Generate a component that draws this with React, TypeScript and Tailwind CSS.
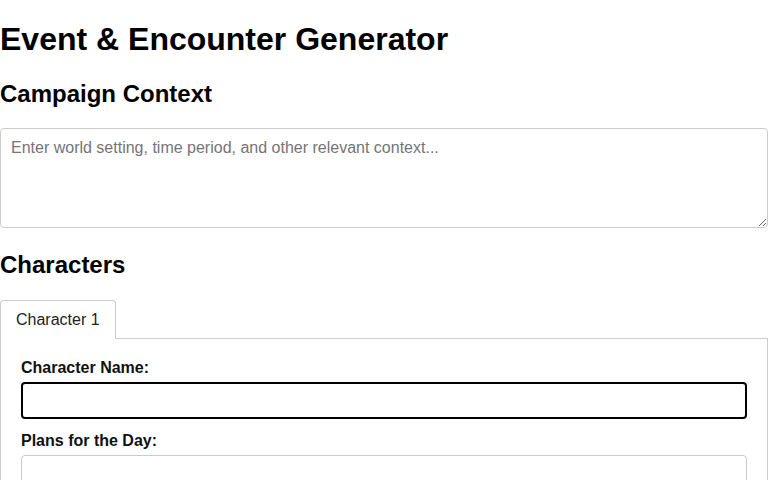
import React from 'react';

export default function App() {
  return (
    <div className="bg-white text-black font-['Liberation_Sans',Arial,sans-serif]">
      <h1 className="text-[32px] font-bold leading-[normal] my-[21.44px]">
        Event &amp; Encounter Generator
      </h1>

      <h2 className="text-[24px] font-bold leading-[normal] mb-[20px]">Campaign Context</h2>
      <textarea
        className="block w-full h-[100px] p-[10px] border border-[#ccc] rounded-[4px] text-[16px] leading-[normal] font-['Liberation_Sans',Arial,sans-serif] placeholder:text-[#757575] resize-y"
        placeholder="Enter world setting, time period, and other relevant context..."
      />

      <h2 className="text-[24px] font-bold leading-[normal] mt-[23px] mb-[21.4px]">Characters</h2>

      <div className="flex">
        <button
          type="button"
          className="relative z-10 -mb-px px-[15px] py-[10px] border border-b-0 border-[#ccc] rounded-t-[4px] bg-white text-[16px] leading-[normal] font-['Liberation_Sans',Arial,sans-serif] text-[#222]"
        >
          Character 1
        </button>
      </div>

      <div className="border border-[#ccc] p-[20px]">
        <div className="mb-[13px]">
          <label className="block mb-[5px] text-[16px] font-bold leading-[normal] text-[#111]">
            Character Name:
          </label>
          <input
            type="text"
            className="block w-full h-[37px] px-[8px] border-2 border-black rounded-[4px] text-[16px] font-['Liberation_Sans',Arial,sans-serif] outline-none"
          />
        </div>
        <div className="mb-[15px]">
          <label className="block mb-[5px] text-[16px] font-bold leading-[normal] text-[#111]">
            Plans for the Day:
          </label>
          <textarea className="block w-full h-[80px] p-[8px] border border-[#ccc] rounded-[4px] text-[16px] font-['Liberation_Sans',Arial,sans-serif]" />
        </div>
      </div>
    </div>
  );
}
